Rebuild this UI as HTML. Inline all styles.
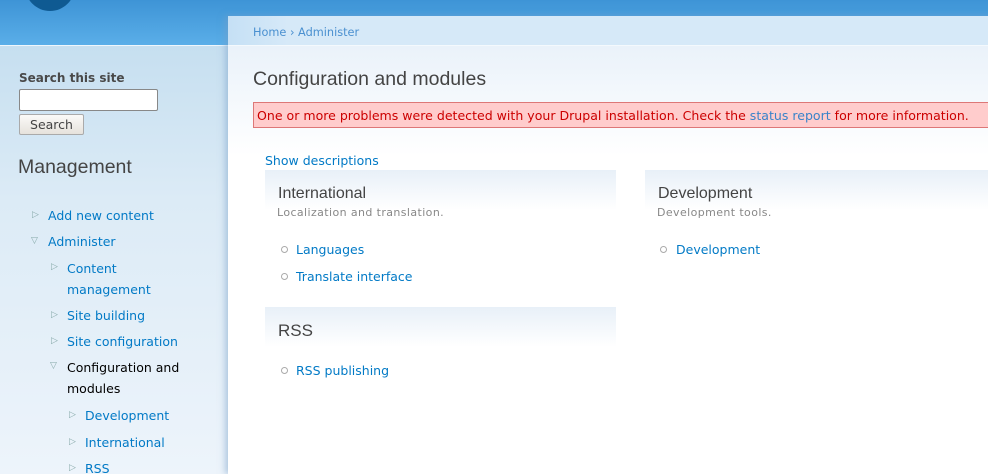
<!DOCTYPE html>
<html><head><meta charset="utf-8"><style>
*{margin:0;padding:0;box-sizing:border-box}
html,body{width:988px;height:474px;overflow:hidden}
body{position:relative;font-family:"DejaVu Sans","Liberation Sans",sans-serif;font-size:12px;background:linear-gradient(#c6dff0 46px,#dcebf6 200px,#edf4fb 474px)}
.a{position:absolute;white-space:nowrap}
a,.l{color:#027ac6;text-decoration:none}
#hdr{position:absolute;left:0;top:0;width:988px;height:46px;background:linear-gradient(#3e94d6,#5aaee8);border-bottom:1px solid #eef6fc}
#logo{position:absolute;left:25px;top:-39px;width:50px;height:50px;border-radius:50%;background:#0f5a92}
#panel{position:absolute;left:228px;top:16px;width:770px;height:458px;background:linear-gradient(#eaf2fa 30px,#ffffff 140px);box-shadow:-3px 0 6px rgba(120,160,200,.5)}
#bc{position:absolute;left:0;top:0;width:100%;height:30px;background:linear-gradient(90deg,#c5e0f5,#d6e9f8 60px);border-bottom:1px solid #f4f9fd}
.tri{position:absolute;font-size:9px;color:#8aa;}
.blk{position:absolute;background:linear-gradient(#e8f0f8,#ffffff 40px)}
.h{font-family:"Liberation Sans",sans-serif;color:#444}
.d{font-size:11px;color:#888;letter-spacing:.4px}
.b{position:absolute;width:7px;height:7px;border:1px solid #aaa;border-radius:50%}
</style></head><body>
<div id="hdr"><div id="logo"></div></div>
<div id="panel"><div id="bc"></div></div>
<div class="a l" style="left:253px;top:26px;font-size:11.3px;color:#4a90d0">Home › Administer</div>

<div class="a" style="left:19px;top:71px;font-weight:bold;color:#494949;font-size:12px">Search this site</div>
<div class="a" style="left:19px;top:89px;width:139px;height:22px;background:#fff;border:1px solid #888;border-radius:2px"></div>
<div class="a" style="left:19px;top:114px;width:65px;height:21px;background:linear-gradient(#fbfaf8,#e6e2dc);border:1px solid #aaa;border-radius:2px;text-align:center;line-height:19px;color:#444;font-size:12.5px">Search</div>
<div class="a h" style="left:18px;top:156px;font-size:19.5px;color:#444">Management</div>

<div class="tri" style="left:32px;top:210px">▷</div><div class="a l" style="left:48px;top:208px;font-size:12.5px">Add new content</div>
<div class="tri" style="left:31px;top:236px">▽</div><div class="a l" style="left:48px;top:234px;font-size:12.5px">Administer</div>
<div class="tri" style="left:51px;top:262px">▷</div><div class="a l" style="left:67px;top:258px;font-size:12.5px;line-height:21px;white-space:normal;width:120px">Content<br>management</div>
<div class="tri" style="left:51px;top:310px">▷</div><div class="a l" style="left:67px;top:308px;font-size:12.5px">Site building</div>
<div class="tri" style="left:51px;top:336px">▷</div><div class="a l" style="left:67px;top:334px;font-size:12.5px">Site configuration</div>
<div class="tri" style="left:50px;top:361px">▽</div><div class="a" style="left:67px;top:357px;font-size:12.5px;line-height:21px;color:#000">Configuration and<br>modules</div>
<div class="tri" style="left:69px;top:410px">▷</div><div class="a l" style="left:85px;top:408px;font-size:12.5px">Development</div>
<div class="tri" style="left:69px;top:437px">▷</div><div class="a l" style="left:85px;top:435px;font-size:12.5px">International</div>
<div class="tri" style="left:69px;top:463px">▷</div><div class="a l" style="left:85px;top:461px;font-size:12.5px">RSS</div>

<div class="a h" style="left:253px;top:68px;font-size:19.5px;color:#444">Configuration and modules</div>
<div class="a" style="left:253px;top:102px;width:740px;height:26px;background:#ffcccc;border:1px solid #dd7777;color:#c00;font-size:12.55px;line-height:25px;padding-left:3px">One or more problems were detected with your Drupal installation. Check the <span style="color:#3a83c9">status report</span> for more information.</div>
<div class="a l" style="left:265px;top:153px;font-size:12.5px">Show descriptions</div>

<div class="blk" style="left:265px;top:170px;width:351px;height:40px"></div>
<div class="a h" style="left:278px;top:185px;font-size:16px">International</div>
<div class="a d" style="left:277px;top:206px">Localization and translation.</div>
<div class="b" style="left:281px;top:246px"></div><div class="a l" style="left:296px;top:242px;font-size:12.5px">Languages</div>
<div class="b" style="left:281px;top:273px"></div><div class="a l" style="left:296px;top:269px;font-size:12.5px">Translate interface</div>

<div class="blk" style="left:265px;top:307px;width:351px;height:40px"></div>
<div class="a h" style="left:278px;top:321px;font-size:17px">RSS</div>
<div class="b" style="left:281px;top:367px"></div><div class="a l" style="left:296px;top:363px;font-size:12.5px">RSS publishing</div>

<div class="blk" style="left:645px;top:170px;width:343px;height:40px"></div>
<div class="a h" style="left:658px;top:185px;font-size:16px">Development</div>
<div class="a d" style="left:657px;top:206px">Development tools.</div>
<div class="b" style="left:660px;top:246px"></div><div class="a l" style="left:676px;top:242px;font-size:12.5px">Development</div>
</body></html>
